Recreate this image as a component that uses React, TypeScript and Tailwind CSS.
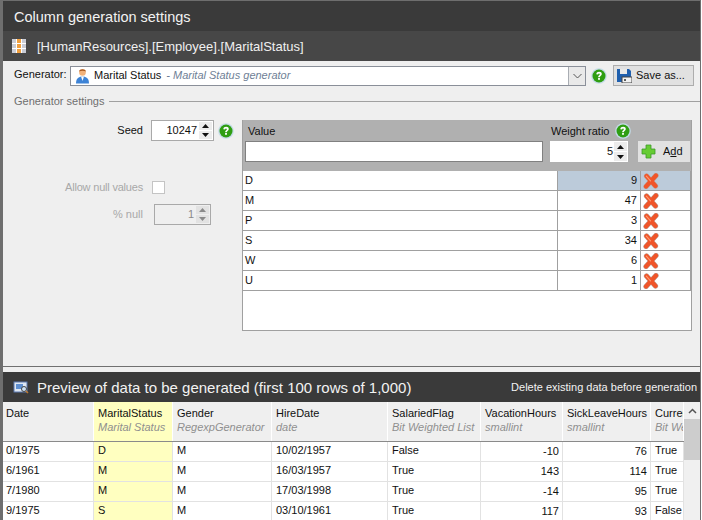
import React from "react";

const font = { fontFamily: '"Liberation Sans", Arial, sans-serif' };

function Help({ className = "" }: { className?: string }) {
  return (
    <svg width="16" height="16" viewBox="0 0 16 16" className={`shrink-0 ${className}`}>
      <circle cx="8" cy="8" r="7.800" fill="#c4dbe8" />
      <circle cx="8" cy="8" r="6.500" fill="#2f9e12" />
      <path d="M5.300 6.200c.2-1.600 1.300-2.400 2.800-2.400 1.600 0 2.700.9 2.700 2.200 0 1.700-2 1.800-2 3.300H7.100C7 7.400 8.800 7.200 8.800 6.200c0-.5-.3-.8-.8-.8-.6 0-.8.4-.9 1z" fill="#fff" />
      <rect x="7.100" y="10" width="1.800" height="1.800" fill="#fff" />
    </svg>
  );
}

function RedX() {
  return (
    <svg width="16" height="16" viewBox="0 0 16 16" className="shrink-0">
      <path d="M3.500 3 12.500 13M13 2.500 3 13.500" stroke="#b9a59d" strokeWidth="5.200" strokeLinecap="round" />
      <path d="M3.500 3 12.500 13M13 2.500 3 13.500" stroke="#f0552a" strokeWidth="4.200" strokeLinecap="round" />
      <path d="M3.300 3.200 7.500 7.800" stroke="#ff9a70" strokeWidth="1.200" strokeLinecap="round" />
    </svg>
  );
}

function Spin({ disabled = false }: { disabled?: boolean }) {
  const c = disabled ? "#8a8a8a" : "#111111";
  const bg = disabled ? "bg-[#e2e2e2]" : "bg-[#ececec]";
  return (
    <div className="flex flex-col w-[15px] gap-px shrink-0 self-stretch p-px">
      <div className={`flex-1 flex items-center justify-center ${bg}`}>
        <svg width="7" height="4" viewBox="0 0 7 4"><path d="M3.500 0 7 4H0z" fill={c} /></svg>
      </div>
      <div className={`flex-1 flex items-center justify-center ${bg}`}>
        <svg width="7" height="4" viewBox="0 0 7 4"><path d="M0 0h7L3.500 4z" fill={c} /></svg>
      </div>
    </div>
  );
}

const weights: [string, string][] = [["D", "9"], ["M", "47"], ["P", "3"], ["S", "34"], ["W", "6"], ["U", "1"]];

const columns = [
  { w: "w-[91px]", name: "Date", sub: "", pad: "pl-[3px]" },
  { w: "w-[79px]", name: "MaritalStatus", sub: "Marital Status", hl: true, pad: "pl-[4px]" },
  { w: "w-[99px]", name: "Gender", sub: "RegexpGenerator", pad: "pl-[4px]" },
  { w: "w-[116px]", name: "HireDate", sub: "date", pad: "pl-[4px]" },
  { w: "w-[93px]", name: "SalariedFlag", sub: "Bit Weighted List", pad: "pl-[4px]" },
  { w: "w-[82px]", name: "VacationHours", sub: "smallint", pad: "pl-[4px]" },
  { w: "w-[88px]", name: "SickLeaveHours", sub: "smallint", pad: "pl-[4px]" },
  { w: "w-[33px]", name: "CurrentFlag", sub: "Bit Weighted List", pad: "pl-[4px]" },
];

const rows = [
  ["0/1975", "D", "M", "10/02/1957", "False", "-10", "76", "True"],
  ["6/1961", "M", "M", "16/03/1957", "True", "143", "114", "True"],
  ["7/1980", "M", "M", "17/03/1998", "True", "-14", "95", "True"],
  ["9/1975", "S", "M", "03/10/1961", "True", "117", "93", "False"],
];

export default function App() {
  return (
    <div style={font} className="w-[701px] h-[520px] overflow-hidden flex flex-col bg-[#efefef] border-l-[3px] border-r border-t border-[#6e6e6e] text-[11px] leading-none text-[#111]">
      <div className="h-[30px] shrink-0 bg-[#3a3a3a] text-[#f2f2f2] text-[14.500px] flex items-center pl-[11px] pt-[2px]">Column generation settings</div>
      <div className="h-[30px] shrink-0 bg-[#474747] text-[#f0f0f0] text-[13px] flex items-center pl-[9px]">
        <svg width="14" height="14" viewBox="0 0 14 14" className="shrink-0 mr-[11px]">
          <rect width="14" height="14" fill="#c9ccd6" />
          <rect x="5" width="4" height="14" fill="#f0a040" />
          <path d="M0 4.500h14M0 9.500h14M4.500 0v14M9.500 0v14" stroke="#ffffff" strokeWidth="1" />
        </svg>
        [HumanResources].[Employee].[MaritalStatus]
      </div>

      <div className="flex items-center h-[21px] mt-[4px] shrink-0">
        <span className="ml-[11px] w-[56px] shrink-0 pb-[2px]">Generator:</span>
        <div className="w-[516px] h-[20px] shrink-0 bg-white border border-[#8a8f99] flex items-center pl-[5px]">
          <svg width="13" height="16" viewBox="0 0 13 16" className="shrink-0 mr-[5px]">
            <circle cx="6.500" cy="4.500" r="3.300" fill="#f2b27a" />
            <path d="M3 3.500C3.500.5 9.500.5 10 3.500 7.500 2.500 5.500 2.500 3 3.500z" fill="#a8581e" />
            <path d="M0 15.500c0-5 2.500-7 6.500-7s6.500 2 6.500 7z" fill="#3d83d6" />
            <path d="M5 8.500h3L6.500 13z" fill="#fff" />
          </svg>
          <span>Marital Status</span>
          <span className="italic text-[#6f7f96] ml-[5px]">- Marital Status generator</span>
          <div className="ml-auto w-[17px] h-full bg-[#e9e9e9] border-l border-[#a9adb3] flex items-center justify-center">
            <svg width="9" height="6" viewBox="0 0 9 6"><path d="M.5 1 4.500 5 8.500 1" fill="none" stroke="#555" strokeWidth="1" /></svg>
          </div>
        </div>
        <Help className="ml-[5px]" />
        <div className="ml-[6px] w-[81px] h-[21px] shrink-0 bg-[#e1e1e1] border border-[#adadad] flex items-center pl-[3px] gap-[4px]">
          <svg width="15" height="15" viewBox="0 0 15 15" className="shrink-0">
            <path d="M0 1h12l2 2v11H0z" fill="#1f5fae" />
            <rect x="3" y="1" width="7" height="5" fill="#e8e8e8" />
            <rect x="5" y="9" width="10" height="6" fill="#f2f2f2" stroke="#444" strokeWidth="1" />
            <path d="M7 11l2 2M9 11l-2 2" stroke="#333" strokeWidth=".8" />
          </svg>
          <span>Save as...</span>
        </div>
      </div>

      <div className="flex items-center mt-[8px] ml-[11px] h-[14px] shrink-0">
        <span className="text-[#707070] mr-[4px]">Generator settings</span>
        <div className="flex-1 h-px bg-[#a0a0a0]" />
      </div>

      <div className="flex h-[246px] shrink-0 mt-[12px]">
        <div className="w-[239px] shrink-0 flex flex-col">
          <div className="flex items-center h-[21px]">
            <span className="w-[140px] text-right">Seed</span>
            <div className="ml-[8px] w-[63px] h-[21px] bg-white border border-[#a9a9a9] flex items-center justify-end">
              <span className="mr-[1px]">10247</span>
              <Spin />
            </div>
            <Help className="ml-[4px]" />
          </div>
          <div className="flex items-center h-[14px] mt-[39px]">
            <span className="w-[140px] text-right text-[#a8a8a8] tracking-[-0.200px]">Allow null values</span>
            <div className="ml-[9px] w-[13px] h-[13px] bg-white border border-[#c4c4c4]" />
          </div>
          <div className="flex items-center h-[21px] mt-[10px]">
            <span className="w-[140px] text-right text-[#a8a8a8]">% null</span>
            <div className="ml-[11px] w-[57px] h-[21px] bg-[#efefef] border border-[#a9a9a9] flex items-center justify-end text-[#8a8a8a]">
              <span className="mr-[1px]">1</span>
              <Spin disabled />
            </div>
          </div>
        </div>

        <div className="w-[450px] h-[211px] shrink-0 flex flex-col bg-white border-x border-b border-[#a0a0a0]">
          <div className="h-[51px] shrink-0 bg-[#b0b0b0] flex items-end pb-[9px] pl-[2px]">
            <div className="flex flex-col w-[298px] shrink-0">
              <span className="ml-[3px] mb-[3px] h-[12px]">Value</span>
              <div className="h-[21px] bg-white border border-[#808080]" />
            </div>
            <div className="flex flex-col w-[78px] ml-[7px] shrink-0">
              <div className="flex items-center h-[16px] mb-[2px] w-[100px]">
                <span className="whitespace-nowrap ml-[1px]">Weight ratio</span>
                <Help className="ml-[5px]" />
              </div>
              <div className="h-[21px] bg-white flex items-center justify-end">
                <span>5</span>
                <Spin />
              </div>
            </div>
            <div className="ml-[10px] w-[52px] h-[21px] bg-[#e1e1e1] flex items-center pl-[3px] shrink-0">
              <svg width="15" height="15" viewBox="0 0 15 15" className="shrink-0">
                <path d="M5 1h5v4h4v5h-4v4H5v-4H1V5h4z" fill="#66cc33" stroke="#3d9a28" strokeWidth=".8" />
              </svg>
              <span className="ml-[7px]">A<span className="underline">d</span>d</span>
            </div>
          </div>
          {weights.map(([v, n], i) => (
            <div key={v} className="h-[20px] shrink-0 flex border-b border-[#a0a0a0]">
              <div className="w-[315px] shrink-0 flex items-center pl-[2px] border-r border-[#a0a0a0]">{v}</div>
              <div className={`w-[83px] shrink-0 flex items-center justify-end pr-[3px] border-r border-[#a0a0a0] ${i === 0 ? "bg-[#bccbda]" : ""}`}>{n}</div>
              <div className={`flex-1 flex items-center pl-[2px] border-r border-[#a0a0a0] ${i === 0 ? "bg-[#bccbda]" : ""}`}><RedX /></div>
            </div>
          ))}
        </div>
      </div>

      <div className="h-px shrink-0 bg-[#707070]" />
      <div className="h-[30px] shrink-0 mt-[5px] bg-[#3a3a3a] text-[#f2f2f2] flex items-center pl-[10px]">
        <svg width="16" height="15" viewBox="0 0 16 15" className="shrink-0 mr-[8px]">
          <rect x="1" y="2" width="13" height="10" fill="#dfe7f2" stroke="#5a78b0" />
          <rect x="3" y="4" width="7" height="5" fill="#5f8fd0" />
          <circle cx="11" cy="9" r="2.500" fill="#cfe2f5" stroke="#444" />
          <path d="M13 11l2 2" stroke="#c47a2c" strokeWidth="1.500" />
        </svg>
        <span className="text-[15px]">Preview of data to be generated (first 100 rows of 1,000)</span>
        <span className="ml-auto mr-[3px]">Delete existing data before generation</span>
      </div>

      <div className="flex flex-1 min-h-0 bg-white">
        <div className="w-[681px] shrink-0 overflow-hidden flex flex-col">
          <div className="flex h-[40px] shrink-0 bg-[#efefef] border-b border-[#8a8a8a]">
            {columns.map((c) => (
              <div key={c.name} className={`${c.w} ${c.pad} shrink-0 overflow-hidden border-r border-white flex flex-col pt-[6px] whitespace-nowrap ${c.hl ? "bg-[#ffffc0]" : ""}`}>
                <span className="h-[13px]">{c.name}</span>
                <span className="italic text-[#8f8f8f] mt-[1px]">{c.sub}</span>
              </div>
            ))}
          </div>
          {rows.map((r) => (
            <div key={r[0]} className="flex h-[20px] shrink-0 border-b border-[#e2e2e2]">
              {r.map((v, i) => (
                <div key={i} className={`${columns[i].w} shrink-0 overflow-hidden whitespace-nowrap flex items-center border-r border-[#e2e2e2] ${i === 5 || i === 6 ? "justify-end pr-[3px]" : `${columns[i].pad} pb-[2px]`} ${columns[i].hl ? "bg-[#ffffc0]" : ""}`}>
                  <span>{v}</span>
                </div>
              ))}
            </div>
          ))}
        </div>
        <div className="flex-1 bg-[#f0f0f0] flex flex-col items-center">
          <svg width="9" height="6" viewBox="0 0 9 6" className="mt-[6px]"><path d="M1 5 4.500 1.500 8 5" fill="none" stroke="#555" strokeWidth="1.500" /></svg>
          <div className="w-full h-[41px] mt-[5px] bg-[#cdcdcd]" />
        </div>
      </div>
    </div>
  );
}
